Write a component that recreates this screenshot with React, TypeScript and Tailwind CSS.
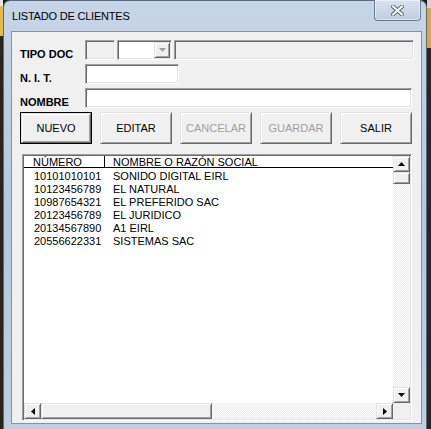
const clientes = [
  { nro: "10101010101", nombre: "SONIDO DIGITAL EIRL" },
  { nro: "10123456789", nombre: "EL NATURAL" },
  { nro: "10987654321", nombre: "EL PREFERIDO SAC" },
  { nro: "20123456789", nombre: "EL JURIDICO" },
  { nro: "20134567890", nombre: "A1 EIRL" },
  { nro: "20556622331", nombre: "SISTEMAS SAC" },
];

const sunken =
  "border border-t-[#a0a0a0] border-l-[#a0a0a0] border-b-white border-r-white shadow-[inset_1px_1px_0_#696969,inset_-1px_-1px_0_#e3e3e3]";
const raised =
  "bg-[#f0f0f0] border border-t-[#e3e3e3] border-l-[#e3e3e3] border-b-[#696969] border-r-[#696969] shadow-[inset_1px_1px_0_#ffffff,inset_-1px_-1px_0_#a0a0a0]";
const track =
  "bg-[image:repeating-conic-gradient(#ffffff_0%_25%,#ebebeb_0%_50%)] bg-[length:2px_2px]";

function Arrow({ dir, color = "#000" }: { dir: "up" | "down" | "left" | "right"; color?: string }) {
  const pts = {
    up: "3.5,0 7,4 0,4",
    down: "0,0 7,0 3.5,4",
    left: "4,0 4,7 0,3.5",
    right: "0,0 4,3.5 0,7",
  }[dir];
  const vertical = dir === "up" || dir === "down";
  return (
    <svg width={vertical ? 7 : 4} height={vertical ? 4 : 7} viewBox={vertical ? "0 0 7 4" : "0 0 4 7"}>
      <polygon points={pts} fill={color} />
    </svg>
  );
}

function Boton({ label, disabled, focused }: { label: string; disabled?: boolean; focused?: boolean }) {
  const inner = (
    <div
      className={`w-full h-full flex items-center justify-center ${raised} ${
        disabled ? "text-[#a0a0a0]" : "text-black"
      }`}
    >
      {label}
    </div>
  );
  if (focused) {
    return <div className="w-[72px] h-[32px] border border-black">{inner}</div>;
  }
  return <div className="w-[72px] h-[32px]">{inner}</div>;
}

export default function App() {
  return (
    <div className="w-[431px] h-[429px] flex bg-[#1c1a16] overflow-hidden font-['Liberation_Sans',Arial,sans-serif] text-[11px] text-black">
      <div className="w-[3px] shrink-0 flex flex-col">
        <div className="h-[6px] bg-[#e6e6e6]" />
        <div className="h-[30px] bg-[#e7b946]" />
        <div className="flex-1 bg-[#2a2419]" />
      </div>

      <div className="w-[424px] shrink-0 flex flex-col rounded-t-[7px] border border-b-0 border-[#5a6a7e] bg-gradient-to-b from-[#c6d5e7] via-[#b5c7dd] to-[#bfcfe2]">
        <div className="h-[30px] flex items-start shrink-0">
          <span className="ml-[8px] mt-[8px] leading-[14px] text-[11px] tracking-[-0.2px]">
            LISTADO DE CLIENTES
          </span>
          <div className="ml-auto mr-[5px] -mt-px w-[47px] h-[21px] rounded-b-[4px] border border-t-0 border-[#6d7d91] bg-gradient-to-b from-[#d9e3ee] to-[#bfcddf] shadow-[inset_0_0_0_1px_rgba(255,255,255,0.45)] flex items-center justify-center">
            <svg width="13" height="11" viewBox="0 0 13 11">
              <path d="M2 1.5 L11 9.5 M11 1.5 L2 9.5" stroke="#5b6678" strokeWidth="4" strokeLinecap="square" />
              <path d="M2 1.5 L11 9.5 M11 1.5 L2 9.5" stroke="#ffffff" strokeWidth="2" strokeLinecap="square" />
            </svg>
          </div>
        </div>

        <div className="ml-[7px] w-[411px] h-[393px] border border-[#8393a8] bg-[#f0f0f0] pt-[8px] pl-[8px] flex flex-col">
          <div className="flex items-start h-[20px]">
            <span className="w-[65px] mt-[8px] leading-[13px] font-bold">TIPO DOC</span>
            <div className={`w-[30px] h-[20px] bg-[#f0f0f0] ${sunken}`} />
            <div className={`ml-[2px] w-[55px] h-[20px] bg-white flex justify-end p-[1px] ${sunken}`}>
              <div className={`w-[16px] h-full flex items-center justify-center ${raised}`}>
                <Arrow dir="down" color="#a0a0a0" />
              </div>
            </div>
            <div className={`ml-[2px] w-[240px] h-[20px] bg-[#f0f0f0] ${sunken}`} />
          </div>

          <div className="flex items-start h-[20px] mt-[4px]">
            <span className="w-[65px] mt-[8px] leading-[13px] font-bold">N. I. T.</span>
            <div className={`w-[94px] h-[20px] bg-white ${sunken}`} />
          </div>

          <div className="flex items-start h-[20px] mt-[4px]">
            <span className="w-[65px] mt-[8px] leading-[13px] font-bold">NOMBRE</span>
            <div className={`w-[327px] h-[20px] bg-white ${sunken}`} />
          </div>

          <div className="flex gap-[8px] mt-[4px]">
            <Boton label="NUEVO" focused />
            <Boton label="EDITAR" />
            <Boton label="CANCELAR" disabled />
            <Boton label="GUARDAR" disabled />
            <Boton label="SALIR" />
          </div>

          <div className={`mt-[10px] ml-[2px] w-[390px] h-[267px] bg-white ${sunken} p-px`}>
            <div className="flex flex-col w-[386px] h-[263px]">
              <div className="flex h-[247px]">
                <div className="w-[369px] bg-white">
                  <div className="flex h-[12px] border-b border-black">
                    <div className="w-[81px] border-r border-black pl-[9px] leading-[13px]">NÚMERO</div>
                    <div className="pl-[8px] leading-[13px]">NOMBRE O RAZÓN SOCIAL</div>
                  </div>
                  <div className="pt-[2px]">
                    {clientes.map((c) => (
                      <div key={c.nro} className="flex h-[13px] leading-[13px]">
                        <span className="w-[81px] pl-[10px]">{c.nro}</span>
                        <span className="pl-[8px]">{c.nombre}</span>
                      </div>
                    ))}
                  </div>
                </div>
                <div className="w-[17px] flex flex-col">
                  <div className={`h-[16px] flex items-center justify-center ${raised}`}>
                    <Arrow dir="up" />
                  </div>
                  <div className={`h-[12px] ${raised}`} />
                  <div className={`flex-1 ${track}`} />
                  <div className={`h-[16px] flex items-center justify-center ${raised}`}>
                    <Arrow dir="down" />
                  </div>
                </div>
              </div>
              <div className="flex h-[16px]">
                <div className={`w-[17px] flex items-center justify-center ${raised}`}>
                  <Arrow dir="left" />
                </div>
                <div className={`w-[171px] ${raised}`} />
                <div className={`flex-1 ${track}`} />
                <div className={`w-[17px] flex items-center justify-center ${raised}`}>
                  <Arrow dir="right" />
                </div>
                <div className="w-[17px] bg-[#f0f0f0]" />
              </div>
            </div>
          </div>
        </div>
      </div>

      <div className="flex-1 flex flex-col">
        <div className="h-[8px] bg-[#d4d4d4]" />
        <div className="h-[40px] bg-[#d9a93c]" />
        <div className="flex-1 bg-[#262626]" />
      </div>
    </div>
  );
}
